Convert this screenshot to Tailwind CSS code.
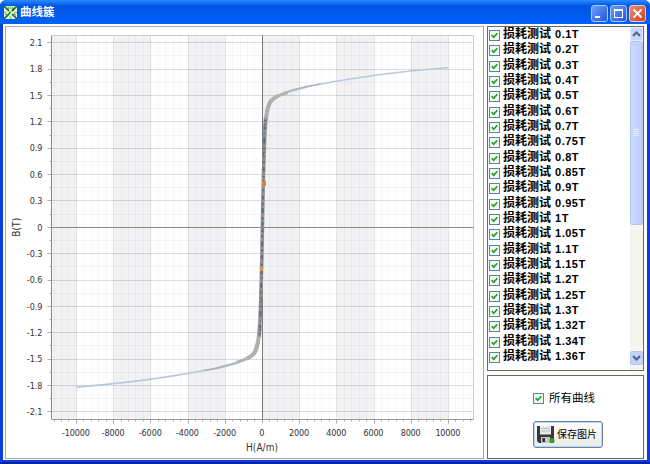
<!DOCTYPE html>
<html lang="zh-Hans">
<head>
    <meta charset="UTF-8">
    <meta name="viewport" content="width=device-width, initial-scale=1.0">
    <title>曲线簇</title>
    <script src="https://cdn.jsdelivr.net/npm/@tailwindcss/browser@4"></script>
</head>
<body class="w-[650px] h-[464px] overflow-hidden bg-white font-['Liberation_Sans','Noto_Sans_CJK_SC',sans-serif]">
    <div class="flex flex-col w-[650px] h-[464px] rounded-t-md overflow-hidden bg-[#0b3fdc] border-b-2 border-[#0223a8]">
        <!-- 标题栏 -->
        <header class="flex items-center h-[24px] shrink-0 pl-1 pr-[4px] bg-linear-to-b from-[#2b8bff] from-0% via-[#0054e3] via-25% to-[#0061fa]">
            <svg class="size-[13px] shrink-0" viewBox="0 0 13 13">
                <rect width="13" height="13" fill="#e4f6dc"/>
                <path d="M0 0L5 5M13 0L8 5M0 13L5 8M13 13L8 8" stroke="#1d6b2c" stroke-width="1.7"/>
                <path d="M6.500 5.500L5 8M8 5L10 3" stroke="#17401f" stroke-width="1.300"/>
                <path d="M6.500 0V3M6.500 10V13M0 6.500H3M10 6.500H13" stroke="#8ed45c" stroke-width="1.600"/>
                <path d="M4 1L5 3M9 1L8 3M1 9L3 8M12 9L10 8" stroke="#2e9b3a"/>
            </svg>
            <h1 class="ml-[3px] text-[11.5px] leading-4 font-bold text-white">曲线簇</h1>
            <div class="ml-auto mt-[2px] flex gap-[2px]">
                <button class="size-[17px] rounded-[3px] border border-[#a9c6fb] bg-linear-to-br from-[#6f9bf6] to-[#2257dd]">
                    <svg class="size-[15px]" viewBox="0 0 15 15"><path d="M3 11H8" stroke="#fff" stroke-width="2"/></svg>
                </button>
                <button class="size-[17px] rounded-[3px] border border-[#a9c6fb] bg-linear-to-br from-[#6f9bf6] to-[#2257dd]">
                    <svg class="size-[15px]" viewBox="0 0 15 15" fill="none" stroke="#fff"><rect x="3.5" y="3.5" width="8" height="8"/><path d="M3 4H12" stroke-width="2"/></svg>
                </button>
                <button class="size-[17px] rounded-[3px] border border-[#f3c5b8] bg-linear-to-br from-[#f08a6c] to-[#cf3d17]">
                    <svg class="size-[15px]" viewBox="0 0 15 15"><path d="M3.500 3.500L11.500 11.500M11.500 3.500L3.500 11.500" stroke="#fff" stroke-width="1.800"/></svg>
                </button>
            </div>
        </header>

        <main class="flex grow mx-[3px] mb-[2px] px-[2px] pt-[2px] pb-[1px] bg-[#fcfcfa]">
            <!-- 图表 -->
            <section class="w-[479px] h-[433px] border border-[#aaa] bg-white">
                <svg id="chart" class="block w-[477px] h-[431px] font-['DejaVu_Sans_Condensed','DejaVu_Sans',sans-serif] text-[9px]" viewBox="6 27 477 431"></svg>
            </section>

            <aside class="flex flex-col ml-[3px] gap-[4px] w-[157px]">
                <!-- 曲线列表 -->
                <div class="flex h-[345px] border-[1.5px] border-[#6a6a64] bg-white overflow-hidden">
                    <ul id="curves" class="grow pl-px"></ul>
                    <div class="flex flex-col w-[13px] bg-[#f5f5f0]">
                        <div class="flex items-center justify-center h-[14px] rounded-xs border border-[#e2eaff] bg-[#c8d7fb]">
                            <svg class="w-[9px] h-[6px]" viewBox="0 0 9 6" fill="none" stroke="#4d6185" stroke-width="2"><path d="M1 5L4.500 1.500L8 5"/></svg>
                        </div>
                        <div class="flex items-center justify-center h-[184px] rounded-xs border border-[#b5c8f4] bg-linear-to-r from-[#cbdafd] to-[#bccdfa]">
                            <svg class="w-[7px] h-[8px]" viewBox="0 0 7 8" stroke="#e8efff"><path d="M0 .5H6M0 2.500H6M0 4.500H6M0 6.500H6"/></svg>
                        </div>
                        <div class="flex items-center justify-center h-[14px] mt-auto mb-[5px] rounded-xs border border-[#b5c8f4] bg-[#c3d3fc]">
                            <svg class="w-[9px] h-[6px]" viewBox="0 0 9 6" fill="none" stroke="#4d6185" stroke-width="2"><path d="M1 1L4.500 4.500L8 1"/></svg>
                        </div>
                    </div>
                </div>

                <!-- 操作区 -->
                <div class="flex flex-col items-start h-[84px] pl-[45px] pt-[15px] border-[1.5px] border-[#6a6a64] bg-white">
                    <label class="flex items-center h-[14px] text-[11.5px] leading-[14px] text-black">
                        <svg class="size-[11px] mr-[5px]" viewBox="0 0 11 11" fill="none"><rect x=".5" y=".5" width="10" height="10" fill="#f5f7f3" stroke="#5a82a8"/><path d="M2.700 5.200L4.700 7.300L8.300 3.200" stroke="#21a121" stroke-width="1.700"/></svg>
                        所有曲线
                    </label>
                    <button class="flex items-center w-[70px] h-[27px] mt-[16px] pl-[2px] rounded-[3px] border border-[#6384a8] bg-linear-to-b from-white to-[#ecebe6] text-[10px] text-black whitespace-nowrap shadow-[inset_0_0_0_1px_#c3d5f1]">
                        <svg class="size-[19px] mr-[2px] shrink-0" viewBox="0 0 19 19">
                            <path d="M1 1H18V18H3L1 16Z" fill="#39393d"/>
                            <rect x="4" y="1" width="11" height="8.500" fill="#e5e7ea"/>
                            <path d="M5 3.500H14M5 6H14" stroke="#c1c4ca"/>
                            <rect x="5" y="12" width="9" height="6" fill="#c4c5ca"/>
                            <rect x="6.500" y="13" width="2.500" height="4" fill="#333"/>
                            <circle cx="16" cy="15.500" r="2.500" fill="#2fa32f"/>
                        </svg>
                        保存图片
                    </button>
                </div>
            </aside>
        </main>
    </div>

    <script>
        // 曲线列表
        const levels = ['0.1', '0.2', '0.3', '0.4', '0.5', '0.6', '0.7', '0.75', '0.8', '0.85', '0.9', '0.95', '1',
            '1.05', '1.1', '1.15', '1.2', '1.25', '1.3', '1.32', '1.34', '1.36'];
        document.getElementById('curves').innerHTML = levels.map(v => `
            <li class="flex items-center h-[15.33px] text-[11px] leading-[15px] font-bold text-black whitespace-nowrap">
                <svg class="size-[11px] mr-[3px] mt-[2px] shrink-0" viewBox="0 0 11 11" fill="none"><rect x=".5" y=".5" width="10" height="10" fill="#f5f7f3" stroke="#5a82a8"/><path d="M2.700 5.200L4.700 7.300L8.300 3.200" stroke="#21a121" stroke-width="1.700"/></svg>
                <span class="text-[12px] mr-[4px]">损耗测试</span><span class="tracking-[0.5px]">${v}T</span>
            </li>`).join('');

        // 坐标换算
        const X = h => 262.4 + h * 0.0186;
        const Y = b => 227.3 - b * 87.9;
        const L = 51.5, R = 473.5, T = 35.5, B = 419.5;
        let s = '';
        const line = (x1, y1, x2, y2, c, w = 1) => {
            s += `<line x1="${x1}" y1="${y1}" x2="${x2}" y2="${y2}" stroke="${c}" stroke-width="${w}"/>`;
        };
        const snap = v => Math.floor(v) + 0.5;

        // 灰色条带
        s += `<rect x="${L}" y="${T}" width="${X(-10000) - L}" height="${B - T}" fill="#f2f2f4"/>`;
        for (let h = -8000; h <= 8000; h += 4000) {
            s += `<rect x="${X(h)}" y="${T}" width="37.2" height="${B - T}" fill="#f2f2f4"/>`;
        }
        // 次网格与刻度
        for (let h = -11200; h <= 11200; h += 400) {
            line(snap(X(h)), T, snap(X(h)), B, '#00000008');
            line(snap(X(h)), B, snap(X(h)), B + 2, '#aaa');
        }
        for (let i = -14; i <= 14; i++) {
            const y = snap(Y(i * 0.15));
            line(L, y, R, y, i % 2 ? '#0000000b' : '#00000022');
            line(L - (i % 2 ? 2 : 4), y, L, y, '#aaa');
        }
        for (let h = -10000; h <= 10000; h += 2000) {
            line(snap(X(h)), T, snap(X(h)), B, '#00000010');
            line(snap(X(h)), B, snap(X(h)), B + 4, '#aaa');
            s += `<text x="${X(h) - 0.5}" y="435.500" text-anchor="middle" fill="#333" textLength="${String(Math.abs(h)).length * 5 + (h < 0 ? 3 : 0)}">${h}</text>`;
        }
        for (let i = -7; i <= 7; i++) {
            const t = i === 0 ? '0' : (i * 0.3).toFixed(1);
            s += `<text x="42.500" y="${Y(i * 0.3) + 3.3}" text-anchor="end" fill="#333">${t}</text>`;
        }
        line(L, T, R, T, '#ccc');
        line(R, T, R, B, '#ccc');
        line(L, T, L, B, '#888');
        line(L, B, R, B, '#999');
        line(L, 227.5, R, 227.5, '#888');
        line(262.5, T, 262.5, B, '#777');

        // 曲线簇
        const tail = 'C272 98 276 97 287 92.800C306 86.500 330 82 350 79C384 73.500 418 70 448.500 67.500';
        const curve = `M262.400 227.300C263 190 264 150 265 126C265.600 112 266.500 105 269.500 100.500${tail}`;
        const both = (d, c, w, extra = '') => {
            s += `<path d="${d}" fill="none" stroke="${c}" stroke-width="${w}" ${extra}/>`;
            s += `<path d="${d}" fill="none" stroke="${c}" stroke-width="${w}" ${extra} transform="rotate(180 262.400 227.300)"/>`;
        };
        both(curve, '#b9cad9', 1.6);
        both('M264.500 126C265.500 111 267 103 272 98.500C280 93 300 87 320 84', '#b0b4b8', 1.5);
        both('M265 130C265.700 116 267 106 271.500 100.500Q274 97.500 278 96', '#b3afa7', 4);
        both('M271 101Q276 96 288 92.800', '#b3b2b0', 2.4);
        both('M262.400 227.300C263 190 264 150 265.500 118', '#8b9196', 3.6);
        both('M262.400 227.300C263 190 264 150 265 120', '#54697b', 1.8, 'stroke-dasharray="5 3 2 4"');
        both('M262.900 227.300C263.500 190 264.500 150 265.500 120', '#c08c69', 1.5, 'stroke-dasharray="2 9 3 6"');
        s += '<rect x="262" y="181" width="4" height="5" fill="#d98245"/><rect x="260" y="267" width="3" height="4" fill="#d99a45"/>';

        s += `<text x="262" y="451" text-anchor="middle" fill="#333" font-size="10" textLength="32">H(A/m)</text>`;
        s += `<text transform="translate(20 227.300) rotate(-90)" text-anchor="middle" fill="#333" font-size="10" textLength="19">B(T)</text>`;
        document.getElementById('chart').innerHTML = s;
    </script>
</body>
</html>
